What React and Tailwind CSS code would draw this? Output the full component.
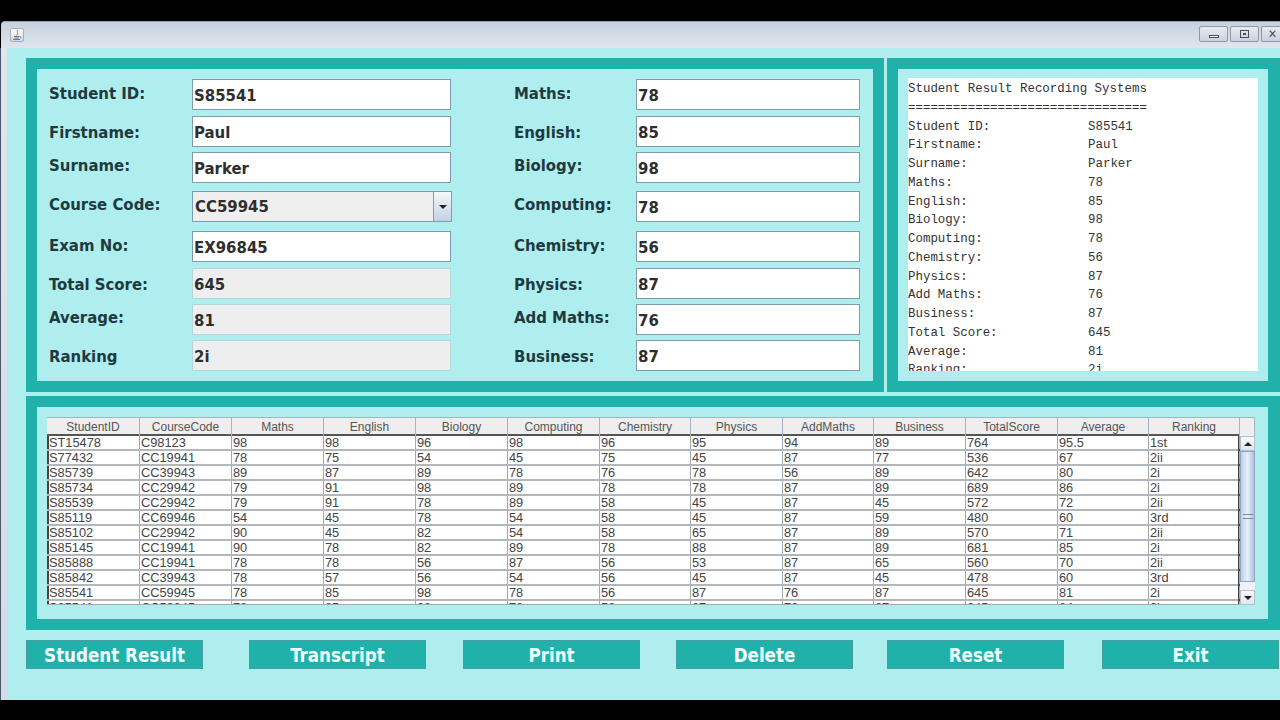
const formRows = [
  { left: 'Student ID:', value: 'S85541', right: 'Maths:', mark: '78', rowClass: 'mt-[10px]', labelClass: 'pb-[1px]' },
  { left: 'Firstname:', value: 'Paul', right: 'English:', mark: '85', rowClass: 'mt-[6px]', labelClass: 'pt-[3px]' },
  { left: 'Surname:', value: 'Parker', right: 'Biology:', mark: '98', rowClass: 'mt-[5px]', labelClass: 'pb-[2px]' },
  { left: 'Course Code:', value: 'CC59945', right: 'Computing:', mark: '78', rowClass: 'mt-[8px]', labelClass: 'pb-[2px]', combo: true },
  { left: 'Exam No:', value: 'EX96845', right: 'Chemistry:', mark: '56', rowClass: 'mt-[9px]', labelClass: 'pb-[1px]' },
  { left: 'Total Score:', value: '645', right: 'Physics:', mark: '87', rowClass: 'mt-[6px]', labelClass: 'pt-[3px]', locked: true },
  { left: 'Average:', value: '81', right: 'Add Maths:', mark: '76', rowClass: 'mt-[5px]', labelClass: 'pb-[3px]', locked: true },
  { left: 'Ranking', value: '2i', right: 'Business:', mark: '87', rowClass: 'mt-[5px]', labelClass: 'pt-[4px]', locked: true },
];

const receipt = [
  ['Student ID:', 'S85541'],
  ['Firstname:', 'Paul'],
  ['Surname:', 'Parker'],
  ['Maths:', '78'],
  ['English:', '85'],
  ['Biology:', '98'],
  ['Computing:', '78'],
  ['Chemistry:', '56'],
  ['Physics:', '87'],
  ['Add Maths:', '76'],
  ['Business:', '87'],
  ['Total Score:', '645'],
  ['Average:', '81'],
  ['Ranking:', '2i'],
];

const columns = ['StudentID', 'CourseCode', 'Maths', 'English', 'Biology', 'Computing', 'Chemistry', 'Physics', 'AddMaths', 'Business', 'TotalScore', 'Average', 'Ranking'];

const results = [
  ['ST15478', 'C98123', '98', '98', '96', '98', '96', '95', '94', '89', '764', '95.5', '1st'],
  ['S77432', 'CC19941', '78', '75', '54', '45', '75', '45', '87', '77', '536', '67', '2ii'],
  ['S85739', 'CC39943', '89', '87', '89', '78', '76', '78', '56', '89', '642', '80', '2i'],
  ['S85734', 'CC29942', '79', '91', '98', '89', '78', '78', '87', '89', '689', '86', '2i'],
  ['S85539', 'CC29942', '79', '91', '78', '89', '58', '45', '87', '45', '572', '72', '2ii'],
  ['S85119', 'CC69946', '54', '45', '78', '54', '58', '45', '87', '59', '480', '60', '3rd'],
  ['S85102', 'CC29942', '90', '45', '82', '54', '58', '65', '87', '89', '570', '71', '2ii'],
  ['S85145', 'CC19941', '90', '78', '82', '89', '78', '88', '87', '89', '681', '85', '2i'],
  ['S85888', 'CC19941', '78', '78', '56', '87', '56', '53', '87', '65', '560', '70', '2ii'],
  ['S85842', 'CC39943', '78', '57', '56', '54', '56', '45', '87', '45', '478', '60', '3rd'],
  ['S85541', 'CC59945', '78', '85', '98', '78', '56', '87', '76', '87', '645', '81', '2i'],
  ['S85541', 'CC59945', '78', '85', '98', '78', '56', '87', '76', '87', '645', '84', '2i'],
];

const buttons = [
  { label: 'Student Result', margin: '' },
  { label: 'Transcript', margin: 'ml-[46px]' },
  { label: 'Print', margin: 'ml-[37px]' },
  { label: 'Delete', margin: 'ml-[36px]' },
  { label: 'Reset', margin: 'ml-[34px]' },
  { label: 'Exit', margin: 'ml-[38px]' },
];

const gridCols = 'grid grid-cols-[93px_92px_92px_92px_92px_92px_91px_92px_91px_92px_92px_91px_91px]';
const uiFont = "font-['DejaVu_Sans_Condensed','DejaVu_Sans',sans-serif]";

function TextField({ value, locked, className }) {
  return (
    <div
      className={`h-[31px] flex items-center pl-[1px] pt-[4px] text-[16.6px] font-bold text-[#2e2e2e] border ${
        locked ? 'bg-[#eeeeee] border-[#b4d6dc]' : 'bg-white border-[#7f9db0]'
      } ${className}`}
    >
      {value}
    </div>
  );
}

function ComboBox({ value, className }) {
  return (
    <div className={`h-[31px] flex border border-[#7f9db0] bg-[#f0efef] ${className}`}>
      <div className="flex-1 flex items-center pl-[2px] pt-[1px] text-[16.6px] font-bold text-[#2e2e2e]">{value}</div>
      <div className="w-[18px] flex items-center justify-center border-l border-[#7f9db0] bg-gradient-to-b from-[#f6f8fb] to-[#c3d2e3]">
        <svg width="8" height="4" viewBox="0 0 8 4"><path d="M0 0h8L4 4z" fill="#222" /></svg>
      </div>
    </div>
  );
}

function JavaIcon() {
  return (
    <div className="w-[14px] h-[14px] rounded-[2px] border border-[#a9adb3] bg-gradient-to-b from-[#ffffff] to-[#d5d8dc] flex items-center justify-center">
      <svg width="12" height="12" viewBox="0 0 12 12" fill="none">
        <path d="M7 1C5 3 8 4 5.5 6.5" stroke="#d9622b" strokeWidth="1" />
        <path d="M3 7.5h5.5M3.5 9h4.5M2 10.5h7" stroke="#53708f" strokeWidth="0.9" />
        <path d="M9 7.5c1.5 0 1.5 1.6 0 1.8" stroke="#53708f" strokeWidth="0.7" />
      </svg>
    </div>
  );
}

function ArrowButton({ down }) {
  return (
    <div className="h-[15px] flex items-center justify-center bg-gradient-to-b from-[#f8fafc] to-[#dfe6ee] border border-[#b5bfca]">
      <svg width="8" height="4" viewBox="0 0 8 4">
        <path d={down ? 'M0 0h8L4 4z' : 'M0 4h8L4 0z'} fill="#222" />
      </svg>
    </div>
  );
}

export default function App() {
  return (
    <div className={`w-[1280px] h-[720px] overflow-hidden bg-black flex flex-col pt-[21px] pb-[20px] ${uiFont}`}>
      {/* Title bar */}
      <div className="h-[27px] ml-[1px] shrink-0 border-t border-[#9aa3ad] rounded-tl-[4px] bg-gradient-to-b from-[#c6d0dd] to-[#dfe6ee] flex items-center justify-between pl-[9px]">
        <JavaIcon />
        <div className="flex gap-[2px] mt-[-2px]">
          <div className="w-[29px] h-[16px] rounded-[2px] border border-[#8f99a5] bg-gradient-to-b from-[#e6ebf1] to-[#c8d2de] flex items-end justify-center pb-[3px]">
            <div className="w-[10px] h-[3px] border border-[#4b4f55] bg-white" />
          </div>
          <div className="w-[29px] h-[16px] rounded-[2px] border border-[#8f99a5] bg-gradient-to-b from-[#e6ebf1] to-[#c8d2de] flex items-center justify-center">
            <div className="w-[9px] h-[8px] border border-[#4b4f55] flex items-center justify-center">
              <div className="w-[3px] h-[2px] bg-[#4b4f55]" />
            </div>
          </div>
          <div className="w-[19px] h-[16px] rounded-tl-[2px] rounded-bl-[2px] border border-r-0 border-[#8f99a5] bg-gradient-to-b from-[#e6ebf1] to-[#c8d2de] pl-[6px] text-[12px] leading-[14px] text-[#4b4f55]">
            ✕
          </div>
        </div>
      </div>

      {/* Window body */}
      <div className="flex-1 flex">
        <div className="w-[7px] bg-gradient-to-b from-[#dfe6ee] to-[#d4dbe8] border-l border-[#4a5568]" />
        <div className="flex-1 bg-[#afeeee] pl-[19px] pt-[10px]">
          <div className="flex gap-[3px]">
            {/* Entry form */}
            <div className="w-[858px] h-[334px] border-[11px] border-[#20b2aa] bg-[#afeeee]">
              {formRows.map((row) => (
                <div key={row.left} className={`flex items-center h-[31px] ${row.rowClass} text-[16.6px] font-bold text-[#1f3a3f]`}>
                  <div className={`w-[144px] pl-[12px] shrink-0 ${row.labelClass}`}>{row.left}</div>
                  <div className="w-[11px] shrink-0" />
                  {row.combo ? (
                    <ComboBox value={row.value} className="w-[260px] shrink-0" />
                  ) : (
                    <TextField value={row.value} locked={row.locked} className="w-[259px] shrink-0 mr-[1px]" />
                  )}
                  <div className={`ml-[62px] w-[122px] shrink-0 ${row.labelClass}`}>{row.right}</div>
                  <TextField value={row.mark} className="w-[224px] shrink-0" />
                </div>
              ))}
            </div>

            {/* Receipt */}
            <div className="w-[393px] h-[334px] border-[11px] border-r-[12px] border-[#20b2aa] bg-[#afeeee] pt-[9px] px-[10px]">
              <div className="h-[293px] pt-[2px] bg-white overflow-hidden font-['Liberation_Mono',monospace] text-[12.45px] leading-[18.75px] text-[#333] whitespace-pre font-medium">
                <div>Student Result Recording Systems</div>
                <div>================================</div>
                {receipt.map(([name, val]) => (
                  <div key={name} className="flex">
                    <span className="w-[180px] shrink-0">{name}</span>
                    <span>{val}</span>
                  </div>
                ))}
              </div>
            </div>
          </div>

          {/* Results table */}
          <div className="mt-[4px] h-[234px] border-[11px] border-r-[12px] border-[#20b2aa] bg-[#afeeee] p-[10px] pr-[13px]">
            <div className="flex h-[188px] font-['Liberation_Sans',sans-serif] text-[#444]">
              <div className="w-[1193px] shrink-0 overflow-hidden border-b border-[#a8a8a8]">
                <div className={`${gridCols} h-[19px] bg-[#eeeeee] border-b-2 border-[#555] text-[12px] text-[#555]`}>
                  {columns.map((col) => (
                    <div key={col} className="flex items-center justify-center border-r border-t border-[#a9b3bd]">
                      {col}
                    </div>
                  ))}
                </div>
                <div className="border-l-2 border-r-2 border-[#444] bg-white text-[12.8px]">
                  {results.map((row, i) => (
                    <div key={i} className={`${gridCols} h-[15px] ml-[-2px] border-b-2 border-[#b3b7bb] leading-[14px]`}>
                      {row.map((cell, j) => (
                        <div key={j} className="pl-[1px] first:pl-[2px] border-r border-[#a0a8b0] overflow-hidden">
                          {cell}
                        </div>
                      ))}
                    </div>
                  ))}
                </div>
              </div>
              <div className="w-[15px] shrink-0 flex flex-col bg-[#eef1f5]">
                <div className="h-[19px] bg-[#eeeeee] border-t border-r border-[#a9b3bd]" />
                <ArrowButton />
                <div className="flex-1 flex items-center justify-center bg-gradient-to-r from-[#bcd0e8] via-[#e8f0fa] to-[#a9c2df] border border-[#8fa6c0]">
                  <div className="w-[10px] h-[5px] border-t border-b border-[#7c8a99]" />
                </div>
                <div className="h-[8px] bg-[#eef1f5]" />
                <ArrowButton down />
              </div>
            </div>
          </div>

          {/* Action buttons */}
          <div className="flex mt-[10px]">
            {buttons.map((btn) => (
              <div
                key={btn.label}
                className={`w-[177px] h-[29px] shrink-0 flex items-center justify-center pt-[2px] bg-[#20b2aa] border border-[#4a9d9d] text-[18.6px] font-bold text-[#f0ffff] ${btn.margin}`}
              >
                {btn.label}
              </div>
            ))}
          </div>
        </div>
      </div>
    </div>
  );
}
